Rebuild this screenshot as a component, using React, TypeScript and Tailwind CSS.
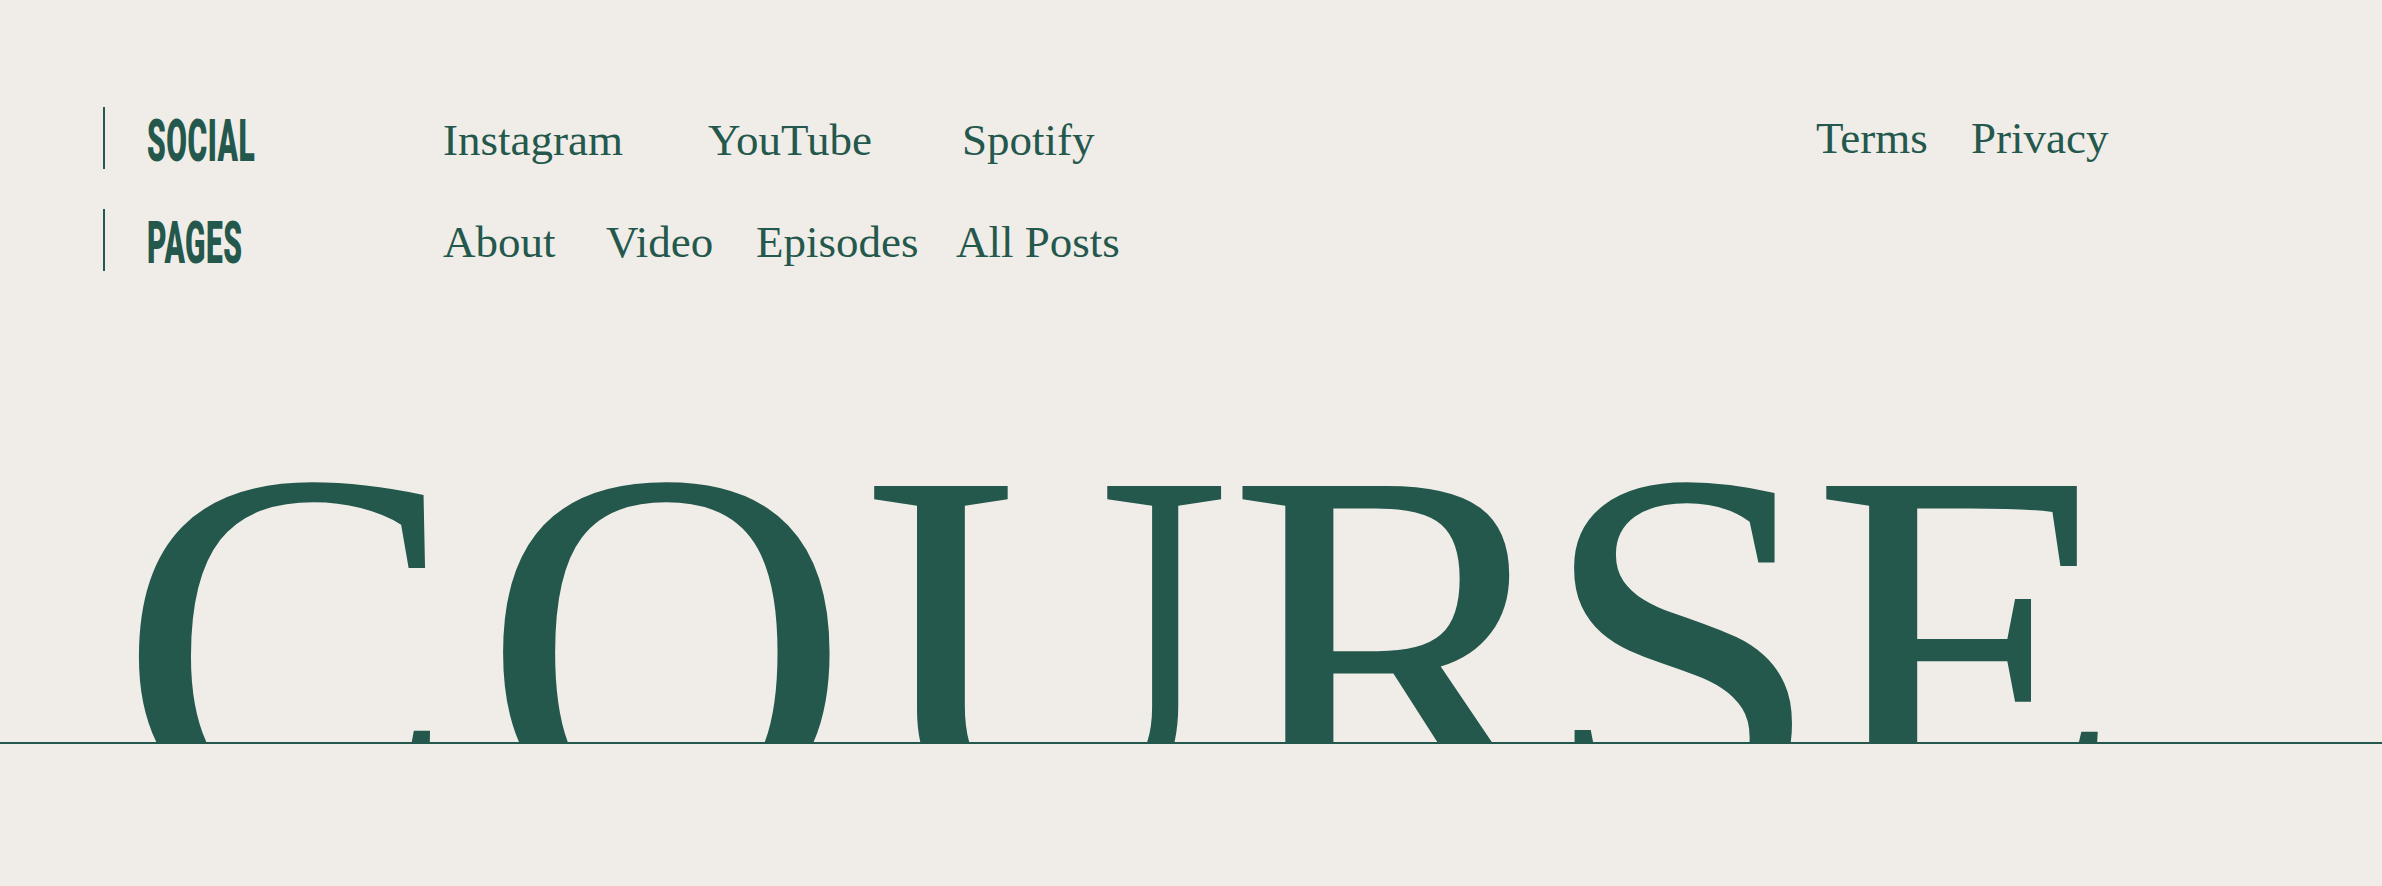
import React from "react";

const serif = "font-['Liberation_Serif','Times_New_Roman',serif]";

function Bar() {
  return <div className="w-[2px] self-stretch bg-[#24584c]" />;
}

function Label({ children }: { children: React.ReactNode }) {
  return (
    <div className="ml-[42px] w-[296px] h-full flex items-center">
      <span className="inline-block origin-left scale-x-[0.5] font-['Roboto',sans-serif] font-black text-[60px] leading-none tracking-[1px] mt-[5px] whitespace-nowrap">
        {children}
      </span>
    </div>
  );
}

function Link({ children, w }: { children: React.ReactNode; w?: string }) {
  return (
    <a href="#" className={`${w ?? ""} block shrink-0 whitespace-nowrap text-[45px] leading-none ${serif}`}>
      {children}
    </a>
  );
}

const letters: { ch: string; mr: string }[] = [
  { ch: "C", mr: "mr-[24px]" },
  { ch: "O", mr: "mr-[13px]" },
  { ch: "U", mr: "mr-[-4px]" },
  { ch: "R", mr: "mr-[-28px]" },
  { ch: "S", mr: "mr-[-12px]" },
  { ch: "E", mr: "mr-0" },
];

export default function App() {
  return (
    <div className="min-h-screen w-full bg-[#f0ede8] text-[#24584c] overflow-hidden">
      <header className="flex w-full pt-[107px] pl-[103px] pr-[280px]">
        <div className="flex flex-col gap-[40px]">
          <nav className="flex h-[62px] items-stretch">
            <Bar />
            <Label>SOCIAL</Label>
            <div className="flex items-center mt-[4px]">
              <Link w="w-[265px]">Instagram</Link>
              <Link w="w-[254px]">YouTube</Link>
              <Link>Spotify</Link>
            </div>
          </nav>
          <nav className="flex h-[62px] items-stretch">
            <Bar />
            <Label>PAGES</Label>
            <div className="flex items-center mt-[4px]">
              <Link w="w-[163px]">About</Link>
              <Link w="w-[150px]">Video</Link>
              <Link w="w-[200px]">Episodes</Link>
              <Link>All Posts</Link>
            </div>
          </nav>
        </div>
        <div className="ml-auto flex h-[62px] w-[286px] items-center">
          <Link w="w-[155px]">Terms</Link>
          <Link>Privacy</Link>
        </div>
      </header>
      <section className="mt-[28px] h-[445px] w-full overflow-hidden border-b-2 border-[#24584c] pl-[118px] pt-[94px]">
        <h1 className={`whitespace-nowrap text-[510px] leading-none font-normal ${serif}`}>
          {letters.map((l) => (
            <span key={l.ch} className={`inline-block ${l.mr}`}>
              {l.ch}
            </span>
          ))}
        </h1>
      </section>
    </div>
  );
}
